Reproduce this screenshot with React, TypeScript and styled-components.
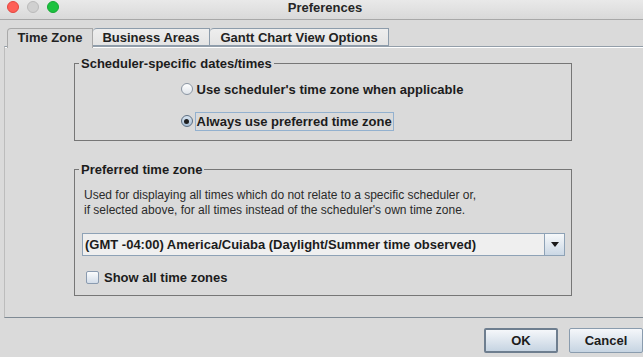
import styled, { createGlobalStyle } from "styled-components";

const GlobalStyle = createGlobalStyle`
  html, body {
    margin: 0;
    padding: 0;
    background: #dadada;
    overflow: hidden;
  }
  body {
    font-family: "Liberation Sans", Arial, sans-serif;
    color: #1c1c1c;
  }
`;

const Window = styled.div`
  width: 650px;
  height: 357px;
  background: #dadada;
  display: flex;
  flex-direction: column;
`;

const TitleBar = styled.div`
  height: 19px;
  border-bottom: 1px solid #a8a8a8;
  background: linear-gradient(#e9e9e9, #d9d9d9);
  display: grid;
  grid-template-columns: 1fr auto 1fr;
  align-items: start;
  padding: 0 7px;
`;

const Lights = styled.div`
  display: flex;
  gap: 8px;
  padding-top: 1px;
`;

const Light = styled.span<{ $bg: string; $edge: string }>`
  width: 12px;
  height: 12px;
  border-radius: 50%;
  box-sizing: border-box;
  background: ${(p) => p.$bg};
  border: 1px solid ${(p) => p.$edge};
`;

const Title = styled.div`
  font-size: 13px;
  font-weight: bold;
  line-height: 16px;
  color: #262626;
`;

const TabRow = styled.div`
  display: flex;
  align-items: flex-end;
  height: 18px;
  margin-top: 8px;
  padding-left: 7px;
`;

const Tab = styled.div<{ $active?: boolean; $w: number }>`
  position: relative;
  z-index: ${(p) => (p.$active ? 1 : 0)};
  width: ${(p) => p.$w}px;
  box-sizing: border-box;
  height: ${(p) => (p.$active ? 20 : 18)}px;
  margin-bottom: ${(p) => (p.$active ? -2 : 0)}px;
  padding-bottom: ${(p) => (p.$active ? 2 : 0)}px;
  display: flex;
  align-items: center;
  justify-content: center;
  font-size: 13px;
  font-weight: bold;
  color: #222;
  background: ${(p) => (p.$active ? "#dadada" : "linear-gradient(#eeeeee, #e4e4e4)")};
  border: 1px solid ${(p) => (p.$active ? "#a9a9a9" : "#8d9cab")};
  border-bottom: ${(p) => (p.$active ? "none" : "1px solid #8d9cab")};
  border-left-width: ${(p) => (p.$active ? 1 : 0)}px;
  border-top-left-radius: 4px;
  &:first-child {
    border-left-width: 1px;
  }
`;

const Pane = styled.div`
  margin: 0 4px;
  height: 272px;
  box-sizing: border-box;
  border-top: 1px solid #939ea9;
  border-left: 1px solid #bcbcbc;
  border-bottom: 1px solid #7f8a94;
  box-shadow: inset 0 1px 0 #ffffff;
  padding: 9px 0 0 69px;
  display: flex;
  flex-direction: column;
  align-items: flex-start;
`;

const Group = styled.fieldset<{ $gap?: number }>`
  width: 498px;
  box-sizing: border-box;
  margin: ${(p) => p.$gap ?? 0}px 0 0 0;
  padding: 0;
  border: 1px solid #767676;
  min-inline-size: 0;
`;

const Legend = styled.legend`
  font-size: 13px;
  font-weight: bold;
  line-height: 15px;
  padding: 0 2px;
  margin-left: 4px;
  color: #1c1c1c;
`;

const ChoiceBody = styled.div`
  padding: 8px 0 9px;
  display: flex;
  justify-content: center;
`;

const ChoiceColumn = styled.div`
  display: flex;
  flex-direction: column;
  gap: 12px;
`;

const RadioRow = styled.label`
  display: flex;
  align-items: center;
  height: 20px;
  gap: 2px;
`;

const RadioDot = styled.span<{ $on?: boolean }>`
  width: 12px;
  height: 12px;
  box-sizing: border-box;
  border-radius: 50%;
  border: 1px solid ${(p) => (p.$on ? "#5d6f83" : "#8b96a3")};
  background: ${(p) =>
    p.$on ? "linear-gradient(#d7e3ef, #a9bfd6)" : "linear-gradient(#ffffff, #dfe4ea)"};
  display: flex;
  align-items: center;
  justify-content: center;
  &::after {
    content: "";
    display: ${(p) => (p.$on ? "block" : "none")};
    width: 5px;
    height: 5px;
    border-radius: 50%;
    background: #1e1e1e;
  }
`;

const ChoiceText = styled.span<{ $focus?: boolean }>`
  font-size: 13px;
  font-weight: bold;
  line-height: 17px;
  padding: 0 1px;
  border: 1px solid ${(p) => (p.$focus ? "#93b1cf" : "transparent")};
`;

const ZoneBody = styled.div`
  padding: 11px 6px 10px 7px;
  display: flex;
  flex-direction: column;
`;

const Note = styled.p`
  margin: 0 0 0 2px;
  font-size: 12px;
  line-height: 15px;
  color: #2a2a2a;
`;

const Combo = styled.div`
  margin-top: 15px;
  height: 23px;
  box-sizing: border-box;
  border: 1px solid #8ea2b6;
  background: #efefef;
  display: flex;
`;

const ComboText = styled.span`
  flex: 1;
  padding-left: 2px;
  font-size: 13px;
  font-weight: bold;
  line-height: 21px;
  color: #1c1c1c;
  white-space: nowrap;
`;

const ComboArrow = styled.span`
  width: 19px;
  border-left: 1px solid #8ea2b6;
  background: linear-gradient(#f6f8fa, #cbd8e5);
  display: flex;
  align-items: center;
  justify-content: center;
  &::after {
    content: "";
    border-left: 4px solid transparent;
    border-right: 4px solid transparent;
    border-top: 5px solid #1a1a1a;
  }
`;

const CheckRow = styled.label`
  margin: 13px 0 0 4px;
  display: flex;
  align-items: center;
  gap: 5px;
  height: 16px;
`;

const CheckBox = styled.span`
  width: 13px;
  height: 13px;
  box-sizing: border-box;
  border: 1px solid #8a9bb0;
  border-radius: 2px;
  background: linear-gradient(#fbfcfd, #d3dde9);
`;

const CheckText = styled.span`
  font-size: 13px;
  font-weight: bold;
  color: #1c1c1c;
`;

const Footer = styled.div`
  display: flex;
  justify-content: flex-end;
  gap: 11px;
  padding: 10px 7px 0 0;
`;

const Button = styled.button<{ $default?: boolean }>`
  width: 74px;
  height: 25px;
  box-sizing: border-box;
  padding: 0;
  border-radius: 2px;
  border: ${(p) => (p.$default ? "2px solid #6e7e8f" : "1px solid #8a9cae")};
  background: linear-gradient(#f5f7fa, #c6d4e2);
  font-family: "Liberation Sans", Arial, sans-serif;
  font-size: 13px;
  font-weight: bold;
  color: #1c1c1c;
`;

export default function App() {
  return (
    <>
      <GlobalStyle />
      <Window>
        <TitleBar>
          <Lights>
            <Light $bg="#fe5f57" $edge="#e2463f" />
            <Light $bg="#d0d0d0" $edge="#bababa" />
            <Light $bg="#1cc23f" $edge="#15a834" />
          </Lights>
          <Title>Preferences</Title>
          <span />
        </TitleBar>

        <TabRow>
          <Tab $active $w={86}>Time Zone</Tab>
          <Tab $w={117}>Business Areas</Tab>
          <Tab $w={179}>Gantt Chart View Options</Tab>
        </TabRow>

        <Pane>
          <Group>
            <Legend>Scheduler-specific dates/times</Legend>
            <ChoiceBody>
              <ChoiceColumn>
                <RadioRow>
                  <RadioDot />
                  <ChoiceText>Use scheduler's time zone when applicable</ChoiceText>
                </RadioRow>
                <RadioRow>
                  <RadioDot $on />
                  <ChoiceText $focus>Always use preferred time zone</ChoiceText>
                </RadioRow>
              </ChoiceColumn>
            </ChoiceBody>
          </Group>

          <Group $gap={21}>
            <Legend>Preferred time zone</Legend>
            <ZoneBody>
              <Note>
                Used for displaying all times which do not relate to a specific scheduler or,
                <br />
                if selected above, for all times instead of the scheduler's own time zone.
              </Note>
              <Combo>
                <ComboText>(GMT -04:00) America/Cuiaba (Daylight/Summer time observed)</ComboText>
                <ComboArrow />
              </Combo>
              <CheckRow>
                <CheckBox />
                <CheckText>Show all time zones</CheckText>
              </CheckRow>
            </ZoneBody>
          </Group>
        </Pane>

        <Footer>
          <Button $default>OK</Button>
          <Button>Cancel</Button>
        </Footer>
      </Window>
    </>
  );
}
